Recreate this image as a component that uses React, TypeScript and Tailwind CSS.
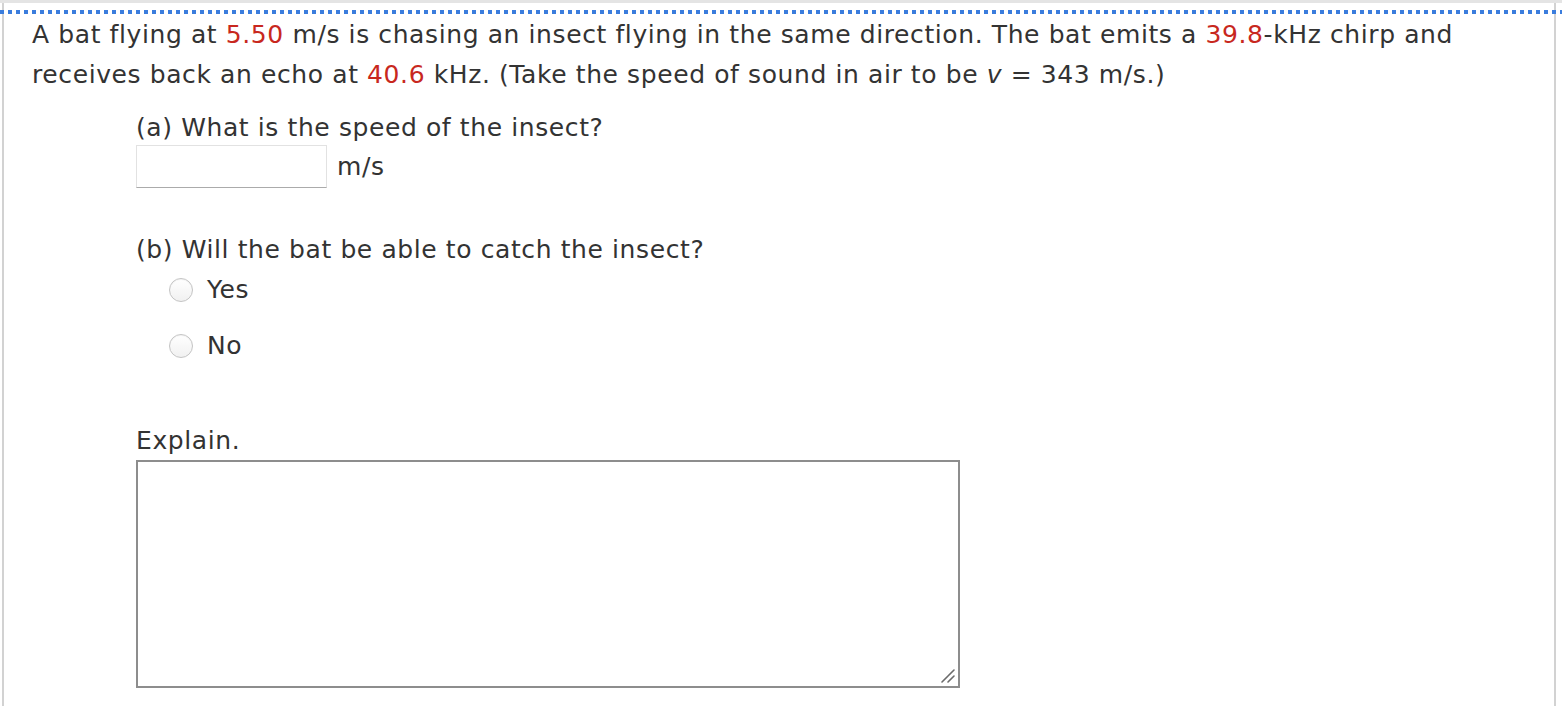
export default function App() {
  const red = "text-[#c8281e]";
  return (
    <div className="relative min-h-[706px] bg-white border-t-[3px] border-[#e4e4e4] font-['DejaVu_Sans',Verdana,sans-serif] text-[25px] tracking-[0.6px] leading-[40px] text-[#333]">
      {/* dotted separator over the frame */}
      <div className="absolute inset-x-0 top-[7px] h-[4px] bg-[repeating-linear-gradient(90deg,#3b7ddd_0px,#3b7ddd_4px,transparent_4px,transparent_8px)]" />

      <div className="ml-[2px] mr-[6px] min-h-[703px] border-l-2 border-r-2 border-[#d2d2d2] pl-[28px] pt-[12px]">
        <p>
          A bat flying at <span className={red}>5.50</span> m/s is chasing an insect flying in the same
          direction. The bat emits a <span className={red}>39.8</span>-kHz chirp and
          <br />
          receives back an echo at <span className={red}>40.6</span> kHz. (Take the speed of sound in air to
          be <i>v</i> = 343 m/s.)
        </p>

        <div className="ml-[104px] mt-[13px]">
          <div>(a) What is the speed of the insect?</div>
          <div className="flex items-center gap-[10px] mt-[-3px]">
            <input
              type="text"
              className="w-[191px] h-[43px] bg-white border border-[#e2e2e2] border-b-[#ababab] outline-none"
            />
            <span>m/s</span>
          </div>

          <div className="mt-[42px]">(b) Will the bat be able to catch the insect?</div>
          <div className="ml-[33px] flex flex-col gap-[16px]">
            {["Yes", "No"].map((opt) => (
              <label key={opt} className="flex items-center gap-[14px]">
                <span className="w-[24px] h-[24px] rounded-full border border-[#c4c4c4] bg-[linear-gradient(180deg,#ffffff,#f1f1f1)] shadow-[inset_0_1px_1px_rgba(0,0,0,0.05)]" />
                <span>{opt}</span>
              </label>
            ))}
          </div>

          <div className="mt-[55px]">Explain.</div>
          <div className="relative w-[824px] h-[228px] mt-[-1px]">
            <textarea className="block w-full h-full resize-none border-2 border-[#8d8d8d] bg-white outline-none" />
            {/* resize grip */}
            <svg className="absolute right-[5px] bottom-[5px]" width="14" height="14" viewBox="0 0 14 14">
              <path d="M1 13 L13 1 M7 13 L13 7" stroke="#6b6b6b" strokeWidth="1.6" strokeLinecap="round" />
            </svg>
          </div>
        </div>
      </div>
    </div>
  );
}
